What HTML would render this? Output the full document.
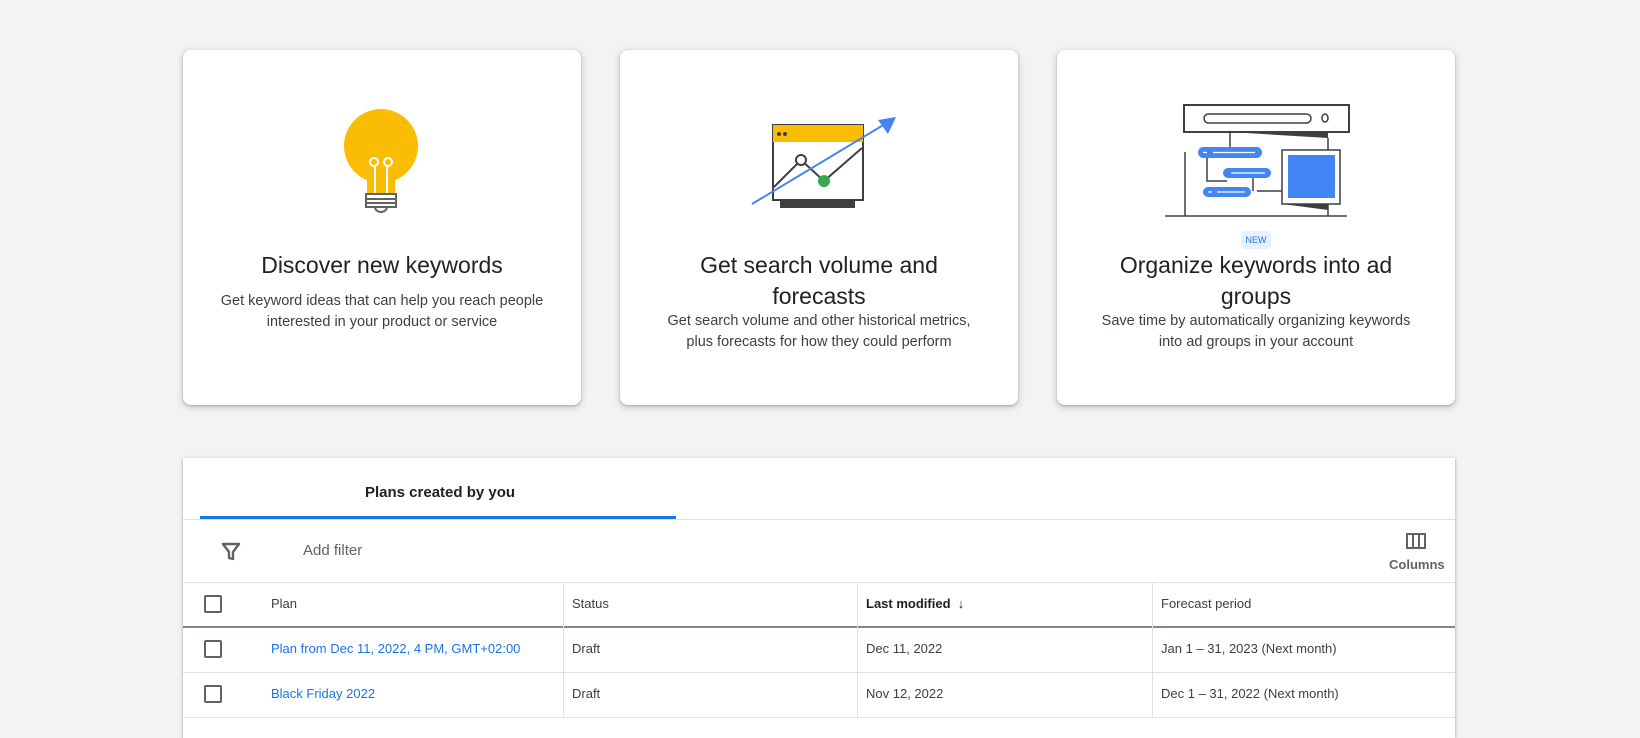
<!DOCTYPE html>
<html><head><meta charset="utf-8"><style>
*{box-sizing:border-box;margin:0;padding:0}
body{width:1640px;height:731px;background:#f1f3f4;font-family:"Liberation Sans",Arial,sans-serif;position:relative;overflow:hidden;color:#3c4043}
.card{position:absolute;top:50px;width:398px;height:355px;background:#fff;border-radius:8px;box-shadow:0 1px 2px rgba(60,64,67,.3),0 2px 6px 2px rgba(60,64,67,.15);text-align:center}
.card h2{position:absolute;left:0;right:0;top:200px;font-weight:400;font-size:23px;line-height:31px;color:#202124}
.card p{position:absolute;left:28px;right:28px;font-size:14.5px;line-height:21px;color:#3c4043}
.card p.n{left:40px;right:40px}
.card svg{position:absolute;left:0;top:0}
.new{position:absolute;left:184px;top:181px;width:30px;height:18px;background:#e8f0fe;color:#1a73e8;font-size:9px;line-height:18px;border-radius:3px}
.tbl{position:absolute;left:183px;top:458px;width:1272px;height:280px;background:#fff;box-shadow:0 1px 2px rgba(60,64,67,.3),0 1px 3px 1px rgba(60,64,67,.15)}
.t{position:absolute;font-size:13px;color:#3c4043}
.cb{position:absolute;left:21px;width:18px;height:18px;border:2px solid #5f6368;border-radius:2px}
.hl{position:absolute;left:0;width:1272px;height:1px;background:#e0e0e0}
.vl{position:absolute;width:1px;background:#e0e0e0;top:124px;height:135px}
a{color:#1a73e8;text-decoration:none}
</style></head><body>

<div class="card" style="left:183px">
<svg width="398" height="200">
<g transform="translate(0,4)">
<circle cx="198" cy="92" r="37" fill="#fbbc04"/>
<rect x="184" y="110" width="28" height="30" fill="#fbbc04"/>
<path d="M192 140V112M204 140V112" stroke="#fff" stroke-width="2"/>
<circle cx="191" cy="108" r="4" fill="none" stroke="#fff" stroke-width="2"/>
<circle cx="205" cy="108" r="4" fill="none" stroke="#fff" stroke-width="2"/>
<rect x="183" y="140" width="30" height="13" fill="#fff" stroke="#5f6368" stroke-width="2"/>
<path d="M184 145H212M184 149H212" stroke="#5f6368" stroke-width="2"/>
<path d="M192 153a6 5 0 0 0 12 0" fill="none" stroke="#5f6368" stroke-width="2"/>
</g>
</svg>
<h2>Discover new keywords</h2>
<p style="top:241px">Get keyword ideas that can help you reach people interested in your product or service</p>
</div>

<div class="card" style="left:620px">
<svg width="398" height="200">
<rect x="153" y="75" width="90" height="75" fill="#fff" stroke="#3c4043" stroke-width="2"/>
<rect x="153" y="75" width="90" height="17" fill="#fbbc04"/>
<circle cx="159" cy="84" r="2" fill="#3c4043"/><circle cx="165" cy="84" r="2" fill="#3c4043"/>
<rect x="160" y="150" width="75" height="8" fill="#3c4043"/>
<path d="M154 137L181 110L204 131L242 98" fill="none" stroke="#3c4043" stroke-width="2"/>
<path d="M132 154L265 74" stroke="#4285f4" stroke-width="2"/>
<path d="M276 67L258 70L268 84Z" fill="#4285f4"/>
<circle cx="181" cy="110" r="5" fill="#fff" stroke="#3c4043" stroke-width="2"/>
<circle cx="204" cy="131" r="6" fill="#34a853"/>
</svg>
<h2>Get search volume and<br>forecasts</h2>
<p class="n" style="top:261px">Get search volume and other historical metrics, plus forecasts for how they could perform</p>
</div>

<div class="card" style="left:1057px">
<svg width="398" height="200">
<rect x="127" y="55" width="165" height="27" fill="#fff" stroke="#3c4043" stroke-width="2"/>
<rect x="147" y="64" width="107" height="9" rx="4.5" fill="none" stroke="#3c4043" stroke-width="1.5"/>
<ellipse cx="268" cy="68" rx="3" ry="4" fill="none" stroke="#3c4043" stroke-width="1.5"/>
<path d="M173 82H271V88Z" fill="#3c4043"/>
<path d="M173 82V102M271 88V166M128 102V166M108 166H290" stroke="#3c4043" stroke-width="1.5" fill="none"/>
<path d="M150 102V131H170M196 127V141" stroke="#3c4043" stroke-width="1.5" fill="none"/>
<path d="M200 141H226" stroke="#3c4043" stroke-width="1.5"/>
<rect x="141" y="97" width="64" height="11" rx="5.5" fill="#4285f4"/>
<rect x="166" y="118" width="48" height="10" rx="5" fill="#4285f4"/>
<rect x="146" y="137" width="48" height="10" rx="5" fill="#4285f4"/>
<path d="M146 102.5H150M156 102.5H198M174 123H208M151 142H155M160 142H188" stroke="#fff" stroke-width="1.2"/>
<rect x="225" y="100" width="58" height="54" fill="#fff" stroke="#3c4043" stroke-width="1.5"/>
<rect x="231" y="105" width="47" height="43" fill="#4285f4"/>
<path d="M225 154H271V160Z" fill="#3c4043"/>
</svg>
<div class="new">NEW</div>
<h2>Organize keywords into ad<br>groups</h2>
<p class="n" style="top:261px">Save time by automatically organizing keywords into ad groups in your account</p>
</div>

<div class="tbl">
<div class="t" style="left:182px;top:26px;font-size:15px;font-weight:bold;color:#202124">Plans created by you</div>
<div style="position:absolute;left:17px;top:58px;width:476px;height:3px;background:#1a73e8"></div>
<div class="hl" style="top:61px"></div>
<svg style="position:absolute;left:38px;top:83px" width="20" height="20"><path d="M2 3H18L12 11V18L8 17V11Z" fill="#fff" stroke="#5f6368" stroke-width="2.4" stroke-linejoin="round"/></svg>
<div class="t" style="left:120px;top:84px;font-size:15px;color:#5f6368">Add filter</div>
<svg style="position:absolute;left:1222px;top:74px" width="22" height="18"><rect x="2" y="2" width="18" height="14" fill="none" stroke="#5f6368" stroke-width="2"/><path d="M8 2V16M14 2V16" stroke="#5f6368" stroke-width="2"/></svg>
<div class="t" style="left:1206px;top:99px;font-weight:bold;color:#5f6368">Columns</div>
<div class="hl" style="top:124px"></div>
<div class="cb" style="top:137px"></div>
<div class="t" style="left:88px;top:138px">Plan</div>
<div class="t" style="left:389px;top:138px">Status</div>
<div class="t" style="left:683px;top:138px;font-weight:bold;color:#202124">Last modified &nbsp;↓</div>
<div class="t" style="left:978px;top:138px">Forecast period</div>
<div class="hl" style="top:168px;height:2px;background:#80868b"></div>
<div class="cb" style="top:182px"></div>
<div class="t" style="left:88px;top:183px"><a>Plan from Dec 11, 2022, 4 PM, GMT+02:00</a></div>
<div class="t" style="left:389px;top:183px">Draft</div>
<div class="t" style="left:683px;top:183px">Dec 11, 2022</div>
<div class="t" style="left:978px;top:183px">Jan 1 – 31, 2023 (Next month)</div>
<div class="hl" style="top:214px"></div>
<div class="cb" style="top:227px"></div>
<div class="t" style="left:88px;top:228px"><a>Black Friday 2022</a></div>
<div class="t" style="left:389px;top:228px">Draft</div>
<div class="t" style="left:683px;top:228px">Nov 12, 2022</div>
<div class="t" style="left:978px;top:228px">Dec 1 – 31, 2022 (Next month)</div>
<div class="hl" style="top:259px"></div>
<div class="vl" style="left:380px"></div>
<div class="vl" style="left:674px"></div>
<div class="vl" style="left:969px"></div>
</div>
</body></html>
